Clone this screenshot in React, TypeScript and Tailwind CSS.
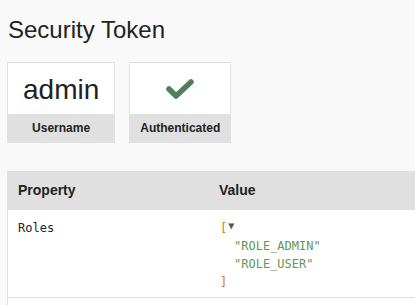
export default function App() {
  return (
    <div className="min-h-screen w-full overflow-hidden bg-[#f9f9f9] text-[#222] font-['Liberation_Sans',Arial,sans-serif]">
      <div className="pl-[7px] pt-[16px]">
        <h2 className="pl-[1px] text-[24px] leading-[28px] font-normal text-[#222]">Security Token</h2>

        {/* Metrics */}
        <div className="mt-[18px] flex gap-[14px]">
          <div className="flex flex-col border border-[#e0e0e0] bg-white">
            <div className="flex h-[51px] items-center justify-center px-[15px] pt-[2px] text-[28px] leading-none">
              admin
            </div>
            <div className="flex h-[28px] items-center justify-center bg-[#e0e0e0] px-[10px] text-[12px] font-bold">
              Username
            </div>
          </div>
          <div className="flex flex-col border border-[#e0e0e0] bg-white">
            <div className="flex h-[51px] items-center justify-center px-[10px] pt-[1px]">
              <svg width="30" height="22" viewBox="0 0 30 22">
                <polyline
                  points="4,11 11,18 26,4"
                  fill="none"
                  stroke="#4f805d"
                  strokeWidth="5.5"
                  strokeLinecap="round"
                  strokeLinejoin="round"
                />
              </svg>
            </div>
            <div className="flex h-[28px] items-center justify-center bg-[#e0e0e0] px-[10px] text-[12px] font-bold">
              Authenticated
            </div>
          </div>
        </div>

        {/* Table */}
        <div className="mt-[28px] w-[600px] bg-white">
          <div className="flex h-[39px] items-center bg-[#e0e0e0] text-[14px] font-bold">
            <div className="w-[202px] pl-[11px]">Property</div>
            <div className="pl-[10px]">Value</div>
          </div>
          <div className="flex border-b border-l border-[#e0e0e0] pt-[9px] pb-[6px] font-['DejaVu_Sans_Mono',monospace] text-[12px] leading-[18px]">
            <div className="w-[201px] pl-[10px]">Roles</div>
            <div className="pl-[11px]">
              <div className="flex items-start">
                <span className="text-[#cc7832]">[</span>
                <span className="ml-[1px] -mt-[2px] text-[10px] text-[#555]">▼</span>
              </div>
              <div className="pl-[14px] text-[#629755]">"ROLE_ADMIN"</div>
              <div className="pl-[14px] text-[#629755]">"ROLE_USER"</div>
              <div className="text-[#cc7832]">]</div>
            </div>
          </div>
          <div className="h-[40px] border-l border-[#e0e0e0]" />
        </div>
      </div>
    </div>
  );
}
